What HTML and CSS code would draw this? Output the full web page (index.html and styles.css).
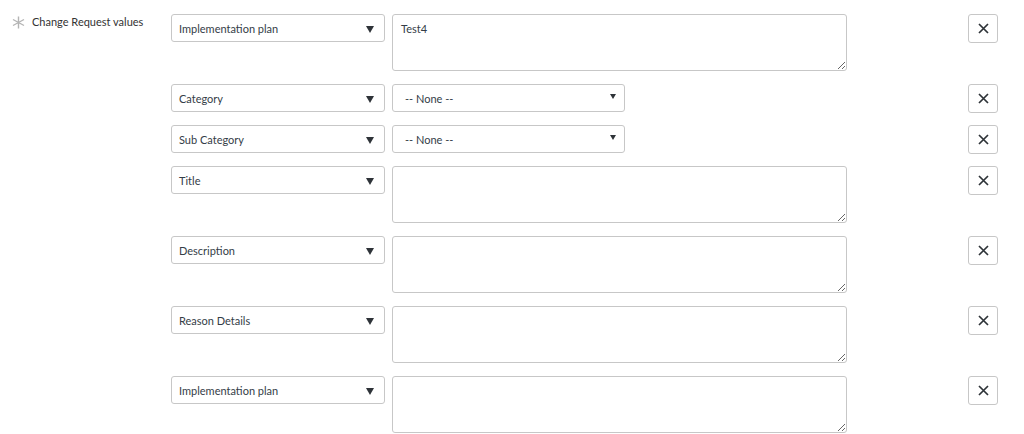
FILE: index.html
```html
<!DOCTYPE html>
<html lang="en">
<head>
    <meta charset="UTF-8">
    <meta name="viewport" content="width=device-width, initial-scale=1.0">
    <title>Change Request values</title>
    <link rel="stylesheet" href="styles.css">
</head>
<body>
    <div class="form-field">
        <label class="field-label">
            <svg class="required" width="13" height="13" viewBox="0 0 13 13"><path d="M6.5 0.5 V12.5 M1 3.5 L12 9.5 M12 3.5 L1 9.5" stroke="#b4b4b4" stroke-width="1.4"/></svg>
            <span>Change Request values</span>
        </label>

        <div class="field-rows">
            <div class="field-row">
                <div class="field-pick"><span>Implementation plan</span></div>
                <textarea class="value-area">Test4</textarea>
                <button class="remove-btn" aria-label="Remove"><svg width="11" height="11" viewBox="0 0 11 11"><path d="M1 1 L10 10 M10 1 L1 10" stroke="#2e3338" stroke-width="1.7"/></svg></button>
            </div>

            <div class="field-row">
                <div class="field-pick"><span>Category</span></div>
                <div class="value-select"><span>-- None --</span></div>
                <button class="remove-btn" aria-label="Remove"><svg width="11" height="11" viewBox="0 0 11 11"><path d="M1 1 L10 10 M10 1 L1 10" stroke="#2e3338" stroke-width="1.7"/></svg></button>
            </div>

            <div class="field-row">
                <div class="field-pick"><span>Sub Category</span></div>
                <div class="value-select"><span>-- None --</span></div>
                <button class="remove-btn" aria-label="Remove"><svg width="11" height="11" viewBox="0 0 11 11"><path d="M1 1 L10 10 M10 1 L1 10" stroke="#2e3338" stroke-width="1.7"/></svg></button>
            </div>

            <div class="field-row">
                <div class="field-pick"><span>Title</span></div>
                <textarea class="value-area"></textarea>
                <button class="remove-btn" aria-label="Remove"><svg width="11" height="11" viewBox="0 0 11 11"><path d="M1 1 L10 10 M10 1 L1 10" stroke="#2e3338" stroke-width="1.7"/></svg></button>
            </div>

            <div class="field-row">
                <div class="field-pick"><span>Description</span></div>
                <textarea class="value-area"></textarea>
                <button class="remove-btn" aria-label="Remove"><svg width="11" height="11" viewBox="0 0 11 11"><path d="M1 1 L10 10 M10 1 L1 10" stroke="#2e3338" stroke-width="1.7"/></svg></button>
            </div>

            <div class="field-row">
                <div class="field-pick"><span>Reason Details</span></div>
                <textarea class="value-area"></textarea>
                <button class="remove-btn" aria-label="Remove"><svg width="11" height="11" viewBox="0 0 11 11"><path d="M1 1 L10 10 M10 1 L1 10" stroke="#2e3338" stroke-width="1.7"/></svg></button>
            </div>

            <div class="field-row">
                <div class="field-pick"><span>Implementation plan</span></div>
                <textarea class="value-area"></textarea>
                <button class="remove-btn" aria-label="Remove"><svg width="11" height="11" viewBox="0 0 11 11"><path d="M1 1 L10 10 M10 1 L1 10" stroke="#2e3338" stroke-width="1.7"/></svg></button>
            </div>
        </div>
    </div>
</body>
</html>
```

FILE: styles.css
```css
* {
    margin: 0;
    padding: 0;
    box-sizing: border-box;
    font-family: 'Lato', 'Liberation Sans', sans-serif;
}

body {
    background-color: #fff;
    color: #343d47;
}

.form-field {
    display: flex;
    padding: 14px 26px 0 12px;
}

.field-label {
    width: 159px;
    flex-shrink: 0;
    display: flex;
    align-items: center;
    align-self: flex-start;
    gap: 7px;
    font-size: 11px;
    line-height: 14px;
    padding-top: 1px;
    color: #333;
}

.field-rows {
    flex: 1;
    display: flex;
    flex-direction: column;
    gap: 13px;
}

.field-row {
    display: flex;
    align-items: flex-start;
    gap: 7px;
}

.field-pick {
    width: 214px;
    height: 28px;
    border: 1px solid #c7c7c7;
    border-radius: 3px;
    padding: 0 10px 0 7px;
    display: flex;
    align-items: center;
    justify-content: space-between;
    font-size: 11px;
}

.field-pick::after {
    content: "";
    border-left: 4px solid transparent;
    border-right: 4px solid transparent;
    border-top: 7px solid #2e3338;
    margin-top: 3px;
}

.value-area {
    width: 455px;
    height: 57px;
    border: 1px solid #c7c7c7;
    border-radius: 3px;
    padding: 7px 8px;
    font-size: 11px;
    color: #343d47;
    resize: vertical;
    outline: none;
}

.value-select {
    width: 233px;
    height: 28px;
    border: 1px solid #c7c7c7;
    border-radius: 3px;
    padding: 0 8px 0 12px;
    display: flex;
    align-items: center;
    justify-content: space-between;
    font-size: 11px;
}

.value-select::after {
    content: "";
    border-left: 3px solid transparent;
    border-right: 3px solid transparent;
    border-top: 5px solid #2e3338;
    margin-top: -3px;
}

.remove-btn {
    margin-left: auto;
    margin-bottom: -1px;
    width: 30px;
    height: 29px;
    border: 1px solid #c7c7c7;
    border-radius: 3px;
    background: #fff;
    display: flex;
    align-items: center;
    justify-content: center;
}
```
